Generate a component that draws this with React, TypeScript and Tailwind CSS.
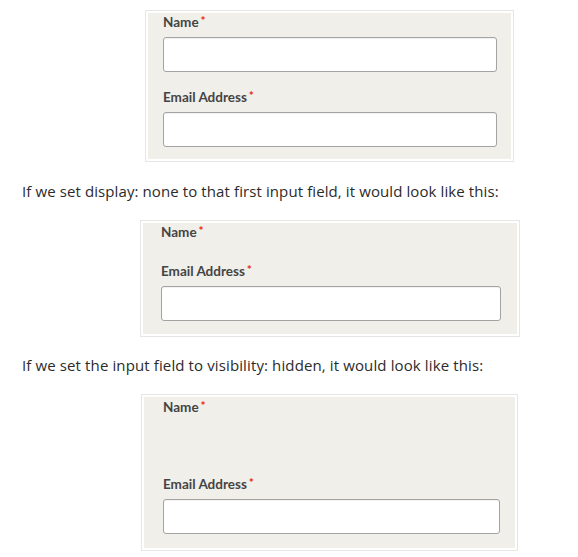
import React from "react";

const labelCls = "block text-[13.5px] leading-[16px] font-bold text-[#444444] [font-family:Lato,'Open_Sans',sans-serif]";

function Label({ text }: { text: string }) {
  return (
    <label className={labelCls}>
      {text}
      <span className="ml-[2px] relative -top-[2px] text-[12px] text-[#ee1c1c]">*</span>
    </label>
  );
}

function Input({ w }: { w: string }) {
  return <div className={`${w} h-[35px] bg-white border border-[#a3a3a3] rounded-[3px] shadow-[inset_0_1px_1px_rgba(0,0,0,0.06)]`} />;
}

export default function App() {
  return (
    <div className="w-[578px] h-[557px] bg-white overflow-hidden relative">
      {/* Panel 1 */}
      <div className="ml-[145px] mt-[10px] w-[369px] border border-[#e6e6e6] p-[2px] bg-white">
        <div className="bg-[#f0efea] pl-[15px] pr-[14px] pt-[1px] pb-[12px]">
          <Label text="Name" />
          <div className="mt-[6px]">
            <Input w="w-[334px]" />
          </div>
          <div className="mt-[17px]">
            <Label text="Email Address" />
          </div>
          <div className="mt-[6px]">
            <Input w="w-[334px]" />
          </div>
        </div>
      </div>

      <p className="ml-[22px] mt-[18px] text-[15px] leading-[22px] tracking-[0.1px] text-[#2b2b2b] [font-family:'Open_Sans',sans-serif]">
        If we set display: none to that first input field, it would look like this:
      </p>

      {/* Panel 2 */}
      <div className="ml-[140px] mt-[18px] w-[380px] border border-[#e6e6e6] p-[2px] bg-white">
        <div className="bg-[#f0efea] pl-[18px] pr-[17px] pt-[1px] pb-[13px]">
          <Label text="Name" />
          <div className="mt-[22px]">
            <Label text="Email Address" />
          </div>
          <div className="mt-[6px]">
            <Input w="w-[340px]" />
          </div>
        </div>
      </div>

      <p className="ml-[22px] mt-[17px] text-[15px] leading-[22px] tracking-[0.12px] text-[#2b2b2b] [font-family:'Open_Sans',sans-serif]">
        If we set the input field to visibility: hidden, it would look like this:
      </p>

      {/* Panel 3 */}
      <div className="ml-[141px] mt-[18px] w-[377px] border border-[#e6e6e6] p-[2px] bg-white">
        <div className="bg-[#f0efea] pl-[19px] pr-[17px] pt-[2px] pb-[14px]">
          <Label text="Name" />
          <div className="mt-[7px] invisible">
            <Input w="w-[337px]" />
          </div>
          <div className="mt-[18px]">
            <Label text="Email Address" />
          </div>
          <div className="mt-[6px]">
            <Input w="w-[337px]" />
          </div>
        </div>
      </div>
    </div>
  );
}
